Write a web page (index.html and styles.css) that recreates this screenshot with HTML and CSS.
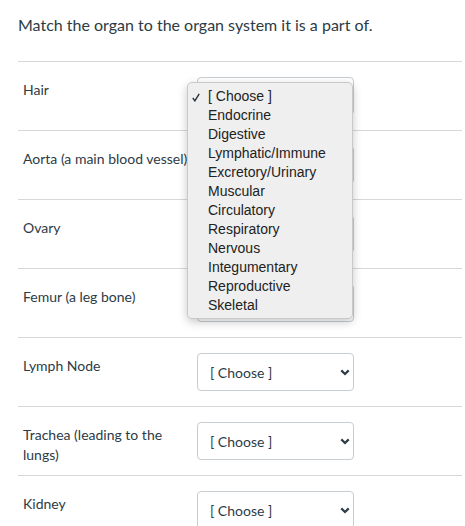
FILE: index.html
```html
<!DOCTYPE html>
<html lang="en">
<head>
    <meta charset="UTF-8">
    <meta name="viewport" content="width=device-width, initial-scale=1.0">
    <title>Matching Question</title>
    <link rel="stylesheet" href="styles.css">
</head>
<body>
    <div class="question">
        <p class="question-text">Match the organ to the organ system it is a part of.</p>

        <div class="answers">
            <div class="answer-row">
                <div class="answer-label">Hair</div>
                <div class="select-wrap">
                    <select class="answer-select">
                        <option>[ Choose ]</option>
                    </select>
                    <svg class="chevron" width="10" height="7" viewBox="0 0 10 7"><path d="M1.3 1.4 L5 5 L8.7 1.4" fill="none" stroke="#2d3b45" stroke-width="2.2"/></svg>

                    <!-- menu aberto do select -->
                    <ul class="dropdown">
                        <li class="checked"><svg class="check" width="8" height="9" viewBox="0 0 8 9"><path d="M0.8 5 L2.9 7.8 L7.2 0.8" fill="none" stroke="#27303b" stroke-width="1.4"/></svg>[ Choose ]</li>
                        <li>Endocrine</li>
                        <li>Digestive</li>
                        <li>Lymphatic/Immune</li>
                        <li>Excretory/Urinary</li>
                        <li>Muscular</li>
                        <li>Circulatory</li>
                        <li>Respiratory</li>
                        <li>Nervous</li>
                        <li>Integumentary</li>
                        <li>Reproductive</li>
                        <li>Skeletal</li>
                    </ul>
                </div>
            </div>

            <div class="answer-row">
                <div class="answer-label">Aorta (a main blood vessel)</div>
                <div class="select-wrap">
                    <select class="answer-select"><option>[ Choose ]</option></select>
                    <svg class="chevron" width="10" height="7" viewBox="0 0 10 7"><path d="M1.3 1.4 L5 5 L8.7 1.4" fill="none" stroke="#2d3b45" stroke-width="2.2"/></svg>
                </div>
            </div>

            <div class="answer-row">
                <div class="answer-label">Ovary</div>
                <div class="select-wrap">
                    <select class="answer-select"><option>[ Choose ]</option></select>
                    <svg class="chevron" width="10" height="7" viewBox="0 0 10 7"><path d="M1.3 1.4 L5 5 L8.7 1.4" fill="none" stroke="#2d3b45" stroke-width="2.2"/></svg>
                </div>
            </div>

            <div class="answer-row">
                <div class="answer-label">Femur (a leg bone)</div>
                <div class="select-wrap">
                    <select class="answer-select"><option>[ Choose ]</option></select>
                    <svg class="chevron" width="10" height="7" viewBox="0 0 10 7"><path d="M1.3 1.4 L5 5 L8.7 1.4" fill="none" stroke="#2d3b45" stroke-width="2.2"/></svg>
                </div>
            </div>

            <div class="answer-row">
                <div class="answer-label">Lymph Node</div>
                <div class="select-wrap">
                    <select class="answer-select"><option>[ Choose ]</option></select>
                    <svg class="chevron" width="10" height="7" viewBox="0 0 10 7"><path d="M1.3 1.4 L5 5 L8.7 1.4" fill="none" stroke="#2d3b45" stroke-width="2.2"/></svg>
                </div>
            </div>

            <div class="answer-row">
                <div class="answer-label">Trachea (leading to the lungs)</div>
                <div class="select-wrap">
                    <select class="answer-select"><option>[ Choose ]</option></select>
                    <svg class="chevron" width="10" height="7" viewBox="0 0 10 7"><path d="M1.3 1.4 L5 5 L8.7 1.4" fill="none" stroke="#2d3b45" stroke-width="2.2"/></svg>
                </div>
            </div>

            <div class="answer-row">
                <div class="answer-label">Kidney</div>
                <div class="select-wrap">
                    <select class="answer-select"><option>[ Choose ]</option></select>
                    <svg class="chevron" width="10" height="7" viewBox="0 0 10 7"><path d="M1.3 1.4 L5 5 L8.7 1.4" fill="none" stroke="#2d3b45" stroke-width="2.2"/></svg>
                </div>
            </div>
        </div>
    </div>
</body>
</html>
```

FILE: styles.css
```css
/* Estilos gerais */
body {
    font-family: Lato, 'Open Sans', sans-serif;
    color: #2d3b45;
    margin: 0;
    padding: 0;
    background-color: #fff;
}

.question {
    padding: 0 3px 0 18px;
}

.question-text {
    font-size: 16px;
    line-height: 24px;
    margin: 0;
    padding: 13px 0 24px;
}

.answer-row {
    display: flex;
    align-items: flex-start;
    height: 68px;
    border-top: 1px solid #d4d8db;
}

.answer-label {
    width: 168px;
    padding: 18px 6px 0 5px;
    font-size: 14px;
    line-height: 20px;
}

.select-wrap {
    position: relative;
    margin-top: 15px;
}

.answer-select {
    appearance: none;
    -webkit-appearance: none;
    width: 157px;
    height: 38px;
    padding: 0 12px;
    font-family: Lato, sans-serif;
    font-size: 14px;
    color: #2d3b45;
    background-color: #fff;
    border: 1px solid #c7cdd1;
    border-radius: 4px;
    box-sizing: border-box;
}

.chevron {
    position: absolute;
    right: 4px;
    top: 16px;
    pointer-events: none;
}

/* Menu aberto */
.dropdown {
    position: absolute;
    top: 5px;
    left: -10px;
    z-index: 10;
    width: 166px;
    margin: 0;
    padding: 4px 0 3px;
    list-style: none;
    box-sizing: border-box;
    background-color: #efefef;
    border: 1px solid #c9c9c9;
    border-radius: 5px;
    box-shadow: 0 3px 10px rgba(0, 0, 0, 0.22);
    font-family: 'Liberation Sans', Arial, sans-serif;
    font-size: 14px;
    line-height: 19px;
    color: #222;
}

.dropdown li {
    padding-left: 20px;
    position: relative;
}

.check {
    position: absolute;
    left: 4px;
    top: 6px;
}
```
